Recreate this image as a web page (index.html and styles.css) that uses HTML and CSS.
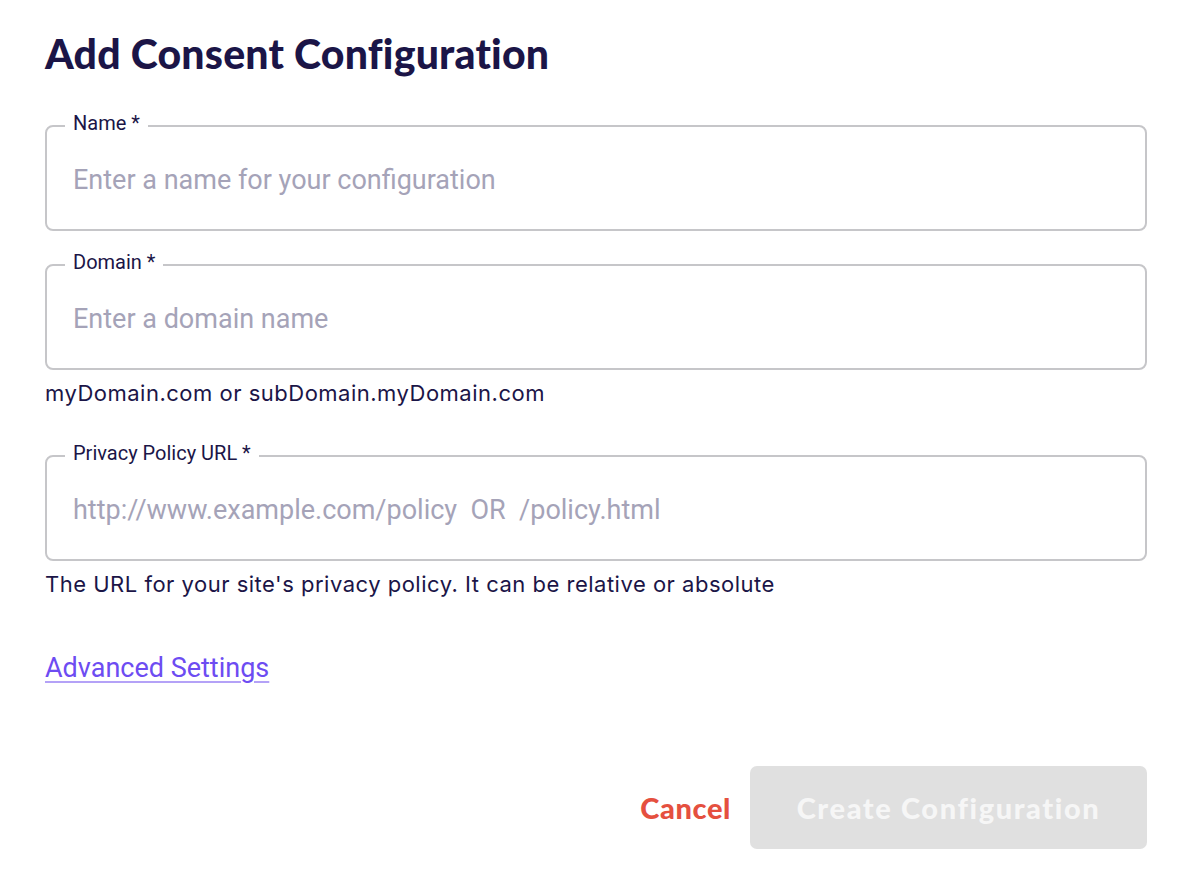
FILE: index.html
```html
<!DOCTYPE html>
<html lang="en">
<head>
    <meta charset="UTF-8">
    <meta name="viewport" content="width=device-width, initial-scale=1.0">
    <title>Add Consent Configuration</title>
    <link rel="stylesheet" href="styles.css">
</head>
<body>
    <div class="container">
        <h1 class="page-title">Add Consent Configuration</h1>

        <form class="config-form">
            <fieldset class="field">
                <legend class="field-label">Name *</legend>
                <input type="text" class="field-input" placeholder="Enter a name for your configuration">
            </fieldset>

            <fieldset class="field">
                <legend class="field-label">Domain *</legend>
                <input type="text" class="field-input" placeholder="Enter a domain name">
            </fieldset>
            <p class="helper">myDomain.com or subDomain.myDomain.com</p>

            <fieldset class="field">
                <legend class="field-label">Privacy Policy URL *</legend>
                <input type="text" class="field-input" placeholder="http://www.example.com/policy  OR  /policy.html">
            </fieldset>
            <p class="helper">The URL for your site's privacy policy. It can be relative or absolute</p>

            <a href="#" class="advanced-link">Advanced Settings</a>

            <div class="actions">
                <button type="button" class="btn-cancel">Cancel</button>
                <button type="button" class="btn-create" disabled>Create Configuration</button>
            </div>
        </form>
    </div>
</body>
</html>
```

FILE: styles.css
```css
* {
    margin: 0;
    padding: 0;
    box-sizing: border-box;
}

body {
    background-color: #ffffff;
    color: #1b1547;
    font-family: Roboto, "Liberation Sans", sans-serif;
}

.container {
    width: 1102px;
    margin-left: 45px;
    padding-top: 30px;
}

.page-title {
    font-family: Lato, sans-serif;
    font-weight: 900;
    font-size: 41px;
    line-height: 48px;
    letter-spacing: 0.2px;
    color: #1b1547;
    margin-bottom: 35px;
}

.config-form {
    display: flex;
    flex-direction: column;
}

.field {
    border: 2px solid #c6c6c9;
    border-radius: 8px;
    padding: 0 18px 8px;
    margin-bottom: 21px;
}

.field-label {
    font-size: 20px;
    line-height: 20px;
    padding: 0 8px 6px;
    color: #1b1547;
}

.field-input {
    display: block;
    width: 100%;
    height: 82px;
    border: none;
    outline: none;
    padding: 0 8px;
    font-family: Roboto, sans-serif;
    font-size: 27px;
    color: #1b1547;
    background: transparent;
}

.field-input::placeholder {
    color: #a5a3b8;
}

.helper {
    font-family: Inter, sans-serif;
    font-size: 22px;
    line-height: 26px;
    letter-spacing: 0.5px;
    color: #1b1547;
    margin-top: -11px;
    margin-bottom: 37px;
}

.advanced-link {
    align-self: flex-start;
    font-size: 27px;
    line-height: 32px;
    color: #6d4cf2;
    text-decoration: underline;
    text-decoration-color: #b4a2f7;
    text-underline-offset: 4px;
    margin-top: 18px;
}

.actions {
    display: flex;
    justify-content: flex-end;
    align-items: center;
    gap: 19px;
    margin-top: 82px;
}

.btn-cancel {
    background: none;
    border: none;
    font-family: Lato, sans-serif;
    font-weight: 900;
    font-size: 29px;
    letter-spacing: 0.6px;
    color: #e5503f;
    cursor: pointer;
}

.btn-create {
    width: 397px;
    height: 83px;
    border: none;
    border-radius: 7px;
    background-color: #e0e0e0;
    color: #f6f6f6;
    font-family: Lato, sans-serif;
    font-weight: 900;
    font-size: 29px;
    letter-spacing: 1.6px;
}
```
